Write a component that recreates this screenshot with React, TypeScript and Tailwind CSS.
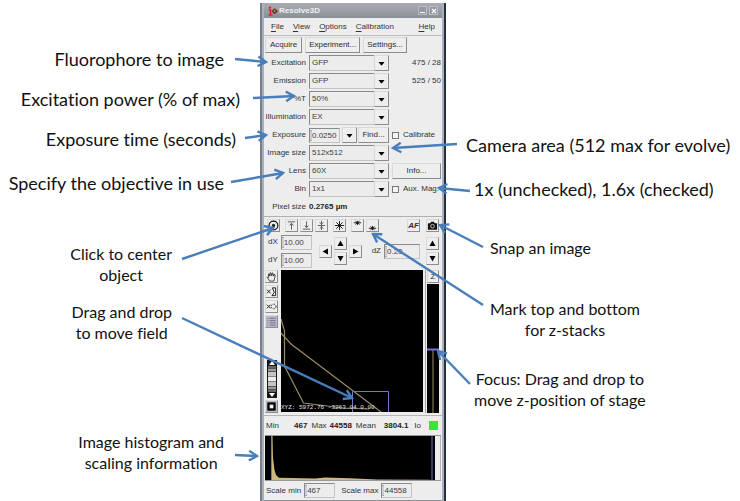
import React from 'react';
import clsx from 'clsx';

const FIELD =
  'border border-t-[#8a8a8a] border-l-[#8a8a8a] border-r-[#c4c4c4] border-b-[#c4c4c4] bg-[#ececec] rounded-none text-[#3c3c3c] outline-none';
const RAISED =
  'border border-t-[#d9d9d9] border-l-[#d9d9d9] border-r-[#8c8c8c] border-b-[#8c8c8c] bg-[#eeeeee] text-[#2c2c2c]';

type Direction = 'up' | 'down' | 'left' | 'right' | 'drop';

const TRIANGLES: Record<Direction, string> = {
  up: 'M0.5 6 L3.5 0.5 L6.5 6 Z',
  down: 'M0.5 1 L6.5 1 L3.5 6.5 Z',
  left: 'M6 0.5 L6 6.5 L0.5 3.5 Z',
  right: 'M1 0.5 L1 6.5 L6.5 3.5 Z',
  drop: 'M0.5 2 H6.5 L4 5.2 H3 Z',
};

const Triangle: React.FC<{ direction: Direction }> = ({ direction }) => (
  <svg viewBox="0 0 7 7" className="h-[7px] w-[7px]" aria-hidden="true">
    <path d={TRIANGLES[direction]} fill="#000" />
  </svg>
);

interface ToolButtonProps {
  label: string;
  children: React.ReactNode;
  className?: string;
}

const ToolButton: React.FC<ToolButtonProps> = ({ label, children, className = '' }) => (
  <button
    type="button"
    aria-label={label}
    className={clsx('flex h-[13px] w-[13px] shrink-0 items-center justify-center', RAISED, className)}
  >
    {children}
  </button>
);

const Glyph: React.FC<{ children: React.ReactNode; color?: string }> = ({ children, color = '#111' }) => (
  <svg
    viewBox="0 0 12 12"
    className="h-[11px] w-[11px] shrink-0"
    fill="none"
    stroke={color}
    strokeWidth="1"
    aria-hidden="true"
  >
    {children}
  </svg>
);

interface SelectRowProps {
  id: string;
  label: string;
  value: string;
  children?: React.ReactNode;
}

const SelectRow: React.FC<SelectRowProps> = ({ id, label, value, children }) => (
  <div className="grid h-[18px] grid-cols-[42px_80px_1fr] items-center gap-x-[3px] pr-px">
    <label htmlFor={id} className="text-right whitespace-nowrap">
      {label}
    </label>
    <div className="relative">
      <select id={id} defaultValue={value} className={clsx('block h-4 w-full appearance-none pl-[2px]', FIELD)}>
        <option>{value}</option>
      </select>
      <span className={clsx('pointer-events-none absolute top-0 right-0 flex h-4 w-[15px] items-center justify-center', RAISED)}>
        <Triangle direction="drop" />
      </span>
    </div>
    {children}
  </div>
);

const CheckOption: React.FC<{ label: string }> = ({ label }) => (
  <label className="flex items-center gap-1 whitespace-nowrap">
    <input type="checkbox" className="h-[7px] w-[7px] shrink-0 appearance-none border border-[#777] bg-[#f4f4f4]" />
    {label}
  </label>
);

const TextField: React.FC<{ id: string; value: string; className?: string }> = ({ id, value, className = '' }) => (
  <div className={clsx('relative', className)}>
    <input id={id} defaultValue={value} className={clsx('block w-full pl-[2px]', FIELD, 'h-[15px]')} />
    {/* Idle insertion cursor */}
    <svg viewBox="0 0 3 11" className="pointer-events-none absolute top-[2px] left-px h-[11px] w-[3px]" aria-hidden="true">
      <path d="M0 0.5 H2 M1 0 V11 M0 10.5 H2" stroke="#999" strokeWidth="0.7" />
    </svg>
  </div>
);

const NumberField: React.FC<{ id: string; label: string; value: string; className?: string }> = ({
  id,
  label,
  value,
  className = '',
}) => (
  <div className="flex items-center gap-[3px]">
    <label htmlFor={id} className="whitespace-nowrap">
      {label}
    </label>
    <TextField id={id} value={value} className={className} />
  </div>
);

const Stage: React.FC = () => (
  <div className="relative h-[142px] min-w-0 flex-1 overflow-hidden bg-black">
    <svg viewBox="0 0 142 142" className="block h-full w-full" preserveAspectRatio="none" fill="none" aria-hidden="true">
      <path d="M0 49 L3.5 61 V96 L22.5 133 L62 138 L88 139" stroke="#9a8c60" strokeWidth="1.2" />
      <path d="M0 63 L10 74 L100 142" stroke="#9a8c60" strokeWidth="1.2" />
      <path d="M71.5 143 V121.5 H107.5 V143" stroke="#7474cc" />
    </svg>
    <span className="absolute bottom-0 left-0 font-['Liberation_Mono',monospace] text-[6px] leading-[8px] whitespace-nowrap text-[#e0e0e0]">
      XYZ: 5972.76 -3263.04 0.00
    </span>
  </div>
);

// Arrow coordinates are measured from the top left corner of the window, inside its frame
const ARROWS = [
  [-27, 56, 4, 59],
  [-9, 95, 32, 93],
  [-17, 135, 4, 132],
  [-31, 179, 21, 170],
  [-80, 256, 11, 225],
  [-80, 315, 90, 395],
  [-27, 452, -5, 453],
  [195, 141, 131, 145],
  [208, 188, 177, 185],
  [221, 244, 178, 222],
  [221, 302, 111, 231],
  [208, 381, 176, 348],
];

const Arrows: React.FC = () => (
  <svg className="pointer-events-none absolute inset-0 h-full w-full overflow-visible" aria-hidden="true">
    <defs>
      <marker id="head" viewBox="0 0 12 12" markerWidth="12" markerHeight="12" refX="10" refY="6" orient="auto" markerUnits="userSpaceOnUse">
        <path d="M2 1.2 L10 6 L2 10.8" fill="none" stroke="#4a7ebb" strokeWidth="2.4" />
      </marker>
    </defs>
    {ARROWS.map(([x1, y1, x2, y2]) => (
      <line key={`${x1}-${y1}`} x1={x1} y1={y1} x2={x2} y2={y2} stroke="#4a7ebb" strokeWidth="2.4" markerEnd="url(#head)" />
    ))}
  </svg>
);

const MENUS = ['File', 'View', 'Options', 'Calibration'];

const MenuItem: React.FC<{ name: string }> = ({ name }) => (
  <button type="button">
    <span className="underline underline-offset-2">{name[0]}</span>
    {name.slice(1)}
  </button>
);

const ResolveWindow: React.FC = () => (
  <div className="relative border-x-2 border-l-[#7b7f88] border-r-[#2a2e35] font-['Liberation_Sans',Arial,sans-serif] text-[8px] leading-[10px] text-[#333]">
    <div className="border-x-2 border-x-[#a3b1c2] bg-[#ededed]">
      <header className="flex h-[15px] items-center bg-gradient-to-b from-[#a9adb3] to-[#8b9097] px-1">
        <svg viewBox="0 0 10 10" className="h-[10px] w-[10px]" aria-hidden="true">
          <path d="M0.5 4 H2.5 V9 M0.5 9 H4.5" stroke="#d8222a" strokeWidth="1.5" fill="none" />
          <circle cx="2" cy="1.6" r="1.2" fill="#d8222a" />
          <path d="M6.5 2.2 L10 5.2 L6.5 8.2 L3.5 5.2 Z" fill="#8a1d1d" />
          <circle cx="6.6" cy="5.2" r="1.1" fill="#5cb531" />
        </svg>
        <h1 className="ml-px flex-1 font-bold text-[#f0f0f0]">Resolve3D</h1>
        <button type="button" aria-label="Minimize" className="mr-[2px] flex h-[9px] w-[9px] items-end justify-center border border-[#b9bdc2] bg-[#959aa1] pb-px">
          <span className="h-px w-[5px] bg-white" />
        </button>
        <button type="button" aria-label="Close" className="flex h-[9px] w-[9px] items-center justify-center border border-[#b9bdc2] bg-[#959aa1]">
          <svg viewBox="0 0 6 6" className="h-[6px] w-[6px]">
            <path d="M1 1 L5 5 M5 1 L1 5" stroke="#fff" strokeWidth="1.2" />
          </svg>
        </button>
      </header>

      <nav className="flex h-[18px] items-center gap-[9px] border-b border-[#bdbdbd] px-[7px]">
        {MENUS.map((name) => (
          <MenuItem key={name} name={name} />
        ))}
        <span className="flex-1" />
        <MenuItem name="Help" />
      </nav>

      <div className="flex gap-[3px] px-px py-px">
        {['Acquire', 'Experiment...', 'Settings...'].map((name) => (
          <button key={name} type="button" className={clsx('h-4 px-[3px] first:px-1', RAISED)}>
            {name}
          </button>
        ))}
      </div>

      <form>
        <SelectRow id="excitation" label="Excitation" value="GFP">
          <span className="text-right">475 / 28</span>
        </SelectRow>
        <SelectRow id="emission" label="Emission" value="GFP">
          <span className="text-right">525 / 50</span>
        </SelectRow>
        <SelectRow id="transmission" label="%T" value="50%" />
        <SelectRow id="illumination" label="Illumination" value="EX" />
        <div className="grid h-[18px] grid-cols-[42px_80px_1fr] items-center gap-x-[3px] pr-px">
          <label htmlFor="exposure" className="text-right">
            Exposure
          </label>
          <div className="flex items-center justify-between">
            <TextField id="exposure" value="0.0250" className="w-[31px]" />
            <button type="button" aria-label="Exposure presets" className={clsx('flex h-4 w-[15px] items-center justify-center', RAISED)}>
              <Triangle direction="drop" />
            </button>
            <button type="button" className={clsx('h-4 w-[31px]', RAISED)}>
              Find...
            </button>
          </div>
          <CheckOption label="Calibrate" />
        </div>
        <SelectRow id="image-size" label="Image size" value="512x512" />
        <SelectRow id="lens" label="Lens" value="60X">
          <button type="button" className={clsx('h-4', RAISED)}>
            Info...
          </button>
        </SelectRow>
        <SelectRow id="bin" label="Bin" value="1x1">
          <CheckOption label="Aux. Mag." />
        </SelectRow>
        <div className="grid h-[18px] grid-cols-[42px_1fr] items-center gap-x-[3px]">
          <span className="text-right whitespace-nowrap">Pixel size</span>
          <b className="text-[#222]">0.2765 µm</b>
        </div>
      </form>

      <div className="flex items-center border-t border-[#b0b0b0] px-[3px] pt-[2px]">
        <ToolButton label="Center object">
          <Glyph>
            <circle cx="6" cy="6" r="4.8" strokeWidth="1.3" />
            <circle cx="6" cy="6" r="1.3" fill="#111" />
          </Glyph>
        </ToolButton>
        <div className="ml-[5px] flex gap-[2px]">
          <ToolButton label="Go to top">
            <Glyph color="#555">
              <path d="M2 2 H10 M6 10.5 V4 M4 6 L6 3.5 L8 6" />
            </Glyph>
          </ToolButton>
          <ToolButton label="Go to bottom">
            <Glyph color="#555">
              <path d="M2 10 H10 M6 1.5 V8 M4 6 L6 8.5 L8 6" />
            </Glyph>
          </ToolButton>
          <ToolButton label="Go to middle">
            <Glyph color="#555">
              <path d="M2 6 H10 M6 1 V11 M4 2.5 L6 4.5 L8 2.5 M4 9.5 L6 7.5 L8 9.5" />
            </Glyph>
          </ToolButton>
        </div>
        <ToolButton label="Mark point" className="ml-[5px]">
          <Glyph>
            <path d="M1 6 H11 M6 1 V11 M2.5 2.5 L9.5 9.5 M9.5 2.5 L2.5 9.5" />
          </Glyph>
        </ToolButton>
        <ToolButton label="Mark top" className="ml-[5px]">
          <Glyph>
            <path d="M2 3 H10 M6 1 V5.5 M3.8 1.2 L8.2 4.8 M8.2 1.2 L3.8 4.8" />
          </Glyph>
        </ToolButton>
        <ToolButton label="Mark bottom" className="ml-[2px]">
          <Glyph>
            <path d="M2 9 H10 M6 6.5 V11 M3.8 7.2 L8.2 10.8 M8.2 7.2 L3.8 10.8" />
          </Glyph>
        </ToolButton>
        <ToolButton label="Autofocus" className="ml-auto">
          <b className="italic">AF</b>
        </ToolButton>
        <ToolButton label="Snap image" className="ml-[6px]">
          <svg viewBox="0 0 12 12" className="h-[11px] w-[11px] shrink-0" aria-hidden="true">
            <path d="M1 3.5 H3.5 L4.5 1.8 H7.5 L8.5 3.5 H11 V10.5 H1 Z" fill="#111" />
            <circle cx="6" cy="6.8" r="2" fill="none" stroke="#ddd" strokeWidth="0.9" />
          </svg>
        </ToolButton>
      </div>

      <div className="flex h-[38px] items-center pr-[3px] pl-1">
        <div className="flex flex-col gap-[3px]">
          <NumberField id="dx" label="dX" value="10.00" className="w-[31px]" />
          <NumberField id="dy" label="dY" value="10.00" className="w-[31px]" />
        </div>
        <div className="ml-[7px] flex items-center gap-[2px]">
          <ToolButton label="Move left">
            <Triangle direction="left" />
          </ToolButton>
          <div className="flex flex-col gap-[2px]">
            <ToolButton label="Move up">
              <Triangle direction="up" />
            </ToolButton>
            <ToolButton label="Move down">
              <Triangle direction="down" />
            </ToolButton>
          </div>
          <ToolButton label="Move right">
            <Triangle direction="right" />
          </ToolButton>
        </div>
        <div className="ml-auto">
          <NumberField id="dz" label="dZ" value="0.20" className="w-[36px]" />
        </div>
        <div className="ml-[6px] flex flex-col gap-[2px]">
          <ToolButton label="Focus up">
            <Triangle direction="up" />
          </ToolButton>
          <ToolButton label="Focus down">
            <Triangle direction="down" />
          </ToolButton>
        </div>
      </div>

      <div className="flex border-b border-[#b5b5b5] pr-[3px] pb-[2px]">
        <div className="flex w-[17px] flex-col items-center gap-[2px] pr-[3px] pl-px">
          <ToolButton label="Pan">
            <Glyph>
              <path d="M4 11 L1.3 7 Q1.5 5.8 3 7 L2.6 3.2 Q3.6 2.2 4.3 5.5 L4.5 1.8 Q5.6 0.8 6.2 5.2 L7 2 Q8.2 1.6 8 5.6 L9.3 3.5 Q10.6 3.8 9.6 7 L8.6 11 Z" strokeWidth="0.8" />
            </Glyph>
          </ToolButton>
          <ToolButton label="Remove region">
            <Glyph>
              <path d="M1 4 L5 8 M5 4 L1 8 M7 2 H10.5 V10.5 H6.5 L9 7 Z" />
            </Glyph>
          </ToolButton>
          <ToolButton label="Remove points">
            <Glyph>
              <path d="M1 4 L5 8 M5 4 L1 8" />
              <circle cx="8.4" cy="6" r="2.6" strokeDasharray="1.5 1.2" />
            </Glyph>
          </ToolButton>
          <ToolButton label="Point list" className="bg-[#b9b9c9]!">
            <Glyph color="#66667c">
              <path d="M1.5 2.5 H2.5 M4 2.5 H10.5 M1.5 5 H2.5 M4 5 H10.5 M1.5 7.5 H2.5 M4 7.5 H10.5 M1.5 10 H2.5 M4 10 H10.5" strokeWidth="0.9" />
            </Glyph>
          </ToolButton>
          <svg viewBox="0 0 10 38" className="mt-auto h-[38px] w-[10px]" aria-hidden="true">
            <rect width="10" height="38" fill="#151515" />
            <path d="M2 5 L5 1 L8 5 Z M2 33 L5 37 L8 33 Z" fill="#fff" />
            <path d="M1 7 H9 M1 31 H9" stroke="#666" strokeWidth="2" />
            <path d="M1 10 H9 M1 28 H9" stroke="#999" strokeWidth="3" />
            <path d="M1 14 H9 M1 24 H9" stroke="#c4c4c4" strokeWidth="4" />
            <path d="M1 19 H9" stroke="#eee" strokeWidth="5" />
          </svg>
          <ToolButton label="Fit view" className="bg-[#b9b9c9]!">
            <Glyph>
              <rect x="2" y="2" width="8" height="8" fill="#000" stroke="#000" />
              <rect x="4.5" y="4.5" width="3" height="3" fill="#fff" stroke="#fff" />
            </Glyph>
          </ToolButton>
        </div>
        <Stage />
        <div className="ml-[2px] flex w-[14px] flex-col border-l border-[#a5a5a5] pl-px">
          <button type="button" className={clsx('h-[13px]', RAISED)}>
            Z
          </button>
          <svg viewBox="0 0 12 129" preserveAspectRatio="none" className="mt-px block w-full flex-1 bg-black" aria-hidden="true">
            <path d="M6 66 V129" stroke="#9a8c60" />
            <path d="M0 65.5 H12" stroke="#7474e8" strokeWidth="2" />
          </svg>
        </div>
      </div>

      <div className="flex h-[19px] items-center pr-1 pl-[2px]">
        <span>Min</span>
        <b className="ml-auto text-[#222]">467</b>
        <span className="ml-1">Max</span>
        <b className="ml-[3px] text-[#222]">44558</b>
        <span className="ml-1">Mean</span>
        <b className="ml-2 text-[#222]">3804.1</b>
        <span className="ml-[6px]">Io</span>
        <span className="ml-2 h-[9px] w-[9px] bg-[#3fe03f]" />
      </div>

      <div className="mx-px flex h-[46px] border-y border-[#999]">
        <svg viewBox="0 0 170 44" preserveAspectRatio="none" className="block h-full min-w-0 flex-1 bg-black" aria-hidden="true">
          <path d="M6.5 44 V0 H7.5 L8 22 L9.5 34 L11 39 L14 41.8 L50 42.4 L60 41.6 L85 42.2 L112 43.4 L165 43.7 V44 Z" fill="#cdb87a" />
          <path d="M6.5 0 V44 M167 0 V44" stroke="#7474d0" />
        </svg>
        <span className="w-[6px] border-r border-[#b5b5b5]" />
      </div>

      <div className="flex h-5 items-center gap-[6px] border-b border-[#8c9097] pl-[2px]">
        <NumberField id="scale-min" label="Scale min" value="467" className="w-[31px]" />
        <NumberField id="scale-max" label="Scale max" value="44558" className="w-[31px]" />
      </div>
    </div>
    <Arrows />
  </div>
);

const BIG = 'text-[18px] leading-6';
const SMALL = 'text-[16px] leading-[21px] text-center';

const App: React.FC = () => (
  <main className="grid min-h-screen grid-cols-[minmax(0,260fr)_186px_minmax(0,294fr)] items-start bg-white pt-[3px] font-[Lato,sans-serif] whitespace-nowrap text-[#111] [font-variant-ligatures:none]">
    <div className="flex flex-col items-end pt-11">
      <p className={clsx('mr-9', BIG)}>Fluorophore to image</p>
      <p className={clsx('mt-4 mr-5', BIG)}>Excitation power (% of max)</p>
      <p className={clsx('mt-4 mr-6', BIG)}>Exposure time (seconds)</p>
      <p className={clsx('mt-5 mr-9', BIG)}>Specify the objective in use</p>
      <p className={clsx('mt-12 mr-[88px]', SMALL)}>
        Click to center
        <br />
        object
      </p>
      <p className={clsx('mt-4 mr-[88px]', SMALL)}>
        Drag and drop
        <br />
        to move field
      </p>
      <p className={clsx('mt-[88px] mr-9', SMALL)}>
        Image histogram and
        <br />
        scaling information
      </p>
    </div>

    <ResolveWindow />

    <div className="flex flex-col items-start pt-[130px]">
      <p className={clsx('ml-5', BIG)}>Camera area (512 max for evolve)</p>
      <p className={clsx('mt-5 ml-7', BIG)}>1x (unchecked), 1.6x (checked)</p>
      <p className={clsx('mt-9 ml-11', SMALL)}>Snap an image</p>
      <p className={clsx('mt-10 ml-11', SMALL)}>
        Mark top and bottom
        <br />
        for z-stacks
      </p>
      <p className={clsx('mt-7 ml-7', SMALL)}>
        Focus: Drag and drop to
        <br />
        move z-position of stage
      </p>
    </div>
  </main>
);

export default App;
